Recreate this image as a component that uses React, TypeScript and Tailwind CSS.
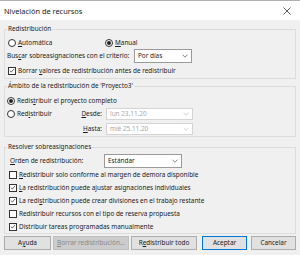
import React from "react";

const M = ({ children }: { children: React.ReactNode }) => (
  <span className="underline underline-offset-[1px] decoration-[0.6px]">{children}</span>
);

const Radio = ({ checked }: { checked?: boolean }) => (
  <span className="w-[8px] h-[8px] rounded-full border border-[#333] bg-white flex items-center justify-center shrink-0">
    {checked && <span className="w-[4px] h-[4px] rounded-full bg-[#222]" />}
  </span>
);

const Check = ({ checked }: { checked?: boolean }) => (
  <span className="w-[8px] h-[8px] border border-[#333] bg-white flex items-center justify-center shrink-0">
    {checked && (
      <svg width="7" height="7" viewBox="0 0 7 7">
        <path d="M1 3.6 L2.7 5.3 L6 1.6" stroke="#333" strokeWidth="0.9" fill="none" />
      </svg>
    )}
  </span>
);

const Chevron = ({ color }: { color: string }) => (
  <svg width="6" height="4" viewBox="0 0 6 4" className="shrink-0">
    <path d="M0.5 0.7 L3 3.2 L5.5 0.7" stroke={color} strokeWidth="0.8" fill="none" />
  </svg>
);

const Select = ({ value, w, disabled, h }: { value: string; w: string; disabled?: boolean; h: string }) => (
  <div
    className={`${w} ${h} flex items-center justify-between pl-[3px] pr-[3px] bg-white border ${
      disabled ? "border-[#d4d4d4] text-[#a8a8a8]" : "border-[#9a9a9a] text-[#1a1a1a]"
    }`}
  >
    <span>{value}</span>
    <Chevron color={disabled ? "#c4c4c4" : "#666"} />
  </div>
);

const CheckRow = ({ checked, children }: { checked?: boolean; children: React.ReactNode }) => (
  <div className="h-[13px] flex items-center pl-[4px]">
    <Check checked={checked} />
    <span className="ml-[2px] whitespace-nowrap">{children}</span>
  </div>
);

const Btn = ({ children, w, ml, variant }: { children: React.ReactNode; w: string; ml: string; variant?: "default" | "disabled" }) => (
  <div
    className={`${w} ${ml} h-[14px] flex items-center justify-center whitespace-nowrap border ${
      variant === "default"
        ? "bg-[#e1e1e1] border-[#0078d7]"
        : variant === "disabled"
        ? "bg-[#cccccc] border-[#bfbfbf] text-[#8a8a8a]"
        : "bg-[#e1e1e1] border-[#adadad]"
    }`}
  >
    {children}
  </div>
);

export default function App() {
  return (
    <div className="w-[300px] h-[255px] bg-[#f0f0f0] flex flex-col overflow-hidden font-['Noto_Sans',sans-serif] text-[6.4px] leading-[10px] text-[#1a1a1a]">
      <div className="h-[20px] shrink-0 bg-white border-t border-[#b0b0b0] flex items-center justify-between pl-[4px] pr-[9px]">
        <span className="text-[7.4px]">Nivelación de recursos</span>
        <svg width="8" height="8" viewBox="0 0 8 8">
          <path d="M0.5 0.5 L7.5 7.5 M7.5 0.5 L0.5 7.5" stroke="#333" strokeWidth="0.8" />
        </svg>
      </div>

      <div className="flex flex-col px-[4px]">
        <fieldset className="m-0 mt-[4px] p-0 pb-[1px] border border-[#dcdcdc] min-w-0">
          <legend className="ml-[2px] px-[1px] h-[10px] leading-[10px]">Redistribución</legend>
          <div className="mt-[2px] h-[13px] flex items-center pl-[3px]">
            <div className="w-[97px] flex items-center">
              <Radio />
              <span className="ml-[2px]"><M>A</M>utomática</span>
            </div>
            <Radio checked />
            <span className="ml-[2px]"><M>M</M>anual</span>
          </div>
          <div className="h-[14px] flex items-center pl-[2px]">
            <span className="w-[127px] whitespace-nowrap">Bus<M>c</M>ar sobreasignaciones con el criterio:</span>
            <Select value="Por días" w="w-[58px]" h="h-[14px]" />
          </div>
          <div className="mt-[1px] h-[13px] flex items-center pl-[3px]">
            <Check checked />
            <span className="ml-[2px] whitespace-nowrap">Borrar <M>v</M>alores de redistribución antes de redistribuir</span>
          </div>
        </fieldset>

        <fieldset className="m-0 mt-[2px] p-0 pb-[1px] border border-[#dcdcdc] min-w-0">
          <legend className="ml-[2px] px-[1px] h-[10px] leading-[10px]">Ámbito de la redistribución de 'Proyecto3'</legend>
          <div className="mt-[3px] h-[13px] flex items-center pl-[2px]">
            <Radio checked />
            <span className="ml-[2px] whitespace-nowrap">Redis<M>t</M>ribuir el proyecto completo</span>
          </div>
          <div className="h-[13px] flex items-center pl-[2px]">
            <div className="w-[68px] flex items-center">
              <Radio />
              <span className="ml-[2px]">Red<M>i</M>stribuir</span>
            </div>
            <span className="w-[27px] text-right"><M>D</M>esde:</span>
            <div className="ml-[4px]">
              <Select value="lun 23.11.20" w="w-[87px]" h="h-[12px]" disabled />
            </div>
          </div>
          <div className="mt-[2px] h-[13px] flex items-center pl-[2px]">
            <div className="w-[68px]" />
            <span className="w-[27px] text-right"><M>H</M>asta:</span>
            <div className="ml-[4px]">
              <Select value="mié 25.11.20" w="w-[87px]" h="h-[12px]" disabled />
            </div>
          </div>
        </fieldset>

        <fieldset className="m-0 mt-[5px] p-0 border border-[#dcdcdc] min-w-0">
          <legend className="ml-[2px] px-[1px] h-[10px] leading-[10px]">Resolver sobreasignaciones</legend>
          <div className="mt-[2px] h-[14px] flex items-center pl-[5px]">
            <span className="w-[94px] whitespace-nowrap"><M>O</M>rden de redistribución:</span>
            <Select value="Estándar" w="w-[78px]" h="h-[14px]" />
          </div>
          <CheckRow><M>R</M>edistribuir solo conforme al margen de demora disponible</CheckRow>
          <CheckRow checked><M>L</M>a redistribución puede ajustar asignaciones individuales</CheckRow>
          <CheckRow checked>La redi<M>s</M>tribución puede crear divisiones en el trabajo restante</CheckRow>
          <CheckRow>Redistribuir recursos con el tipo de reserva propuesta</CheckRow>
          <CheckRow checked>Distribuir tareas programadas manualmente</CheckRow>
        </fieldset>

        <div className="mt-[2px] flex">
          <Btn w="w-[47px]" ml="ml-0">A<M>y</M>uda</Btn>
          <Btn w="w-[76px]" ml="ml-[2px]" variant="disabled"><M>B</M>orrar redistribución...</Btn>
          <Btn w="w-[66px]" ml="ml-[2px]">R<M>e</M>distribuir todo</Btn>
          <Btn w="w-[45px]" ml="ml-[5px]" variant="default">Aceptar</Btn>
          <Btn w="w-[45px]" ml="ml-[4px]">Cancelar</Btn>
        </div>
      </div>
    </div>
  );
}
